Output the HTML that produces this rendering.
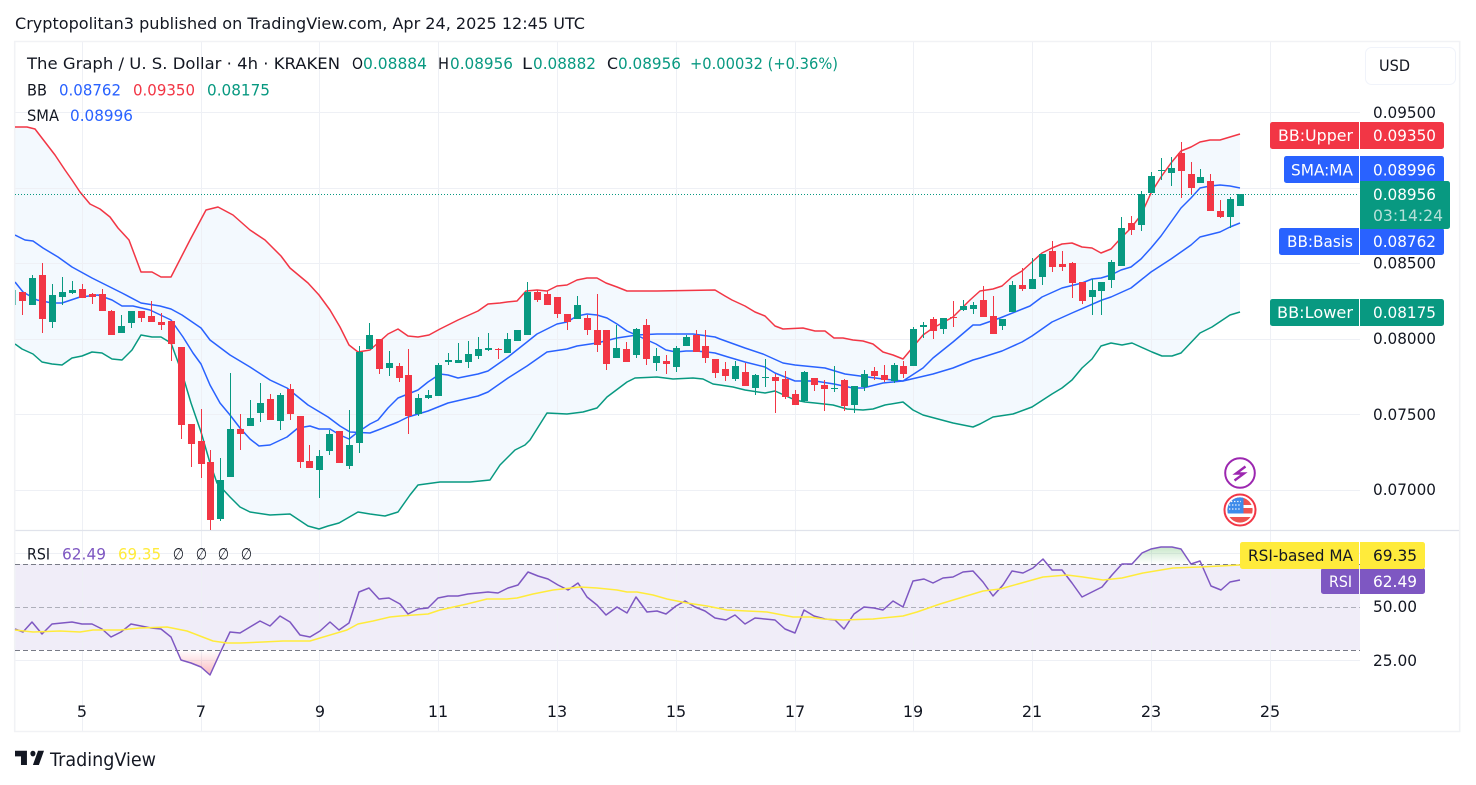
<!DOCTYPE html>
<html lang="en"><head><meta charset="utf-8"><title>The Graph / U. S. Dollar</title>
<style>
html,body{margin:0;padding:0;background:#fff;width:1476px;height:785px;overflow:hidden}
svg{display:block}
text{font-family:"DejaVu Sans","Liberation Sans",sans-serif;font-size:16px;fill:#131722}
.w{fill:#fff}.g{fill:#089981}.r{fill:#f23645}.b{fill:#2962ff}.p{fill:#7e57c2}.y{fill:#ffeb3b}
.l{fill:none;stroke-width:1.5;stroke-linejoin:round}
</style></head><body>
<svg width="1476" height="785" viewBox="0 0 1476 785" xmlns="http://www.w3.org/2000/svg">
<defs>
<clipPath id="c"><rect x="15" y="42" width="1345" height="488"/></clipPath>
<clipPath id="f"><circle cx="1240" cy="510" r="12.6"/></clipPath>
<linearGradient id="ob" gradientUnits="userSpaceOnUse" x1="0" y1="547" x2="0" y2="564"><stop offset="0" stop-color="#4caf50" stop-opacity=".3"/><stop offset="1" stop-color="#4caf50" stop-opacity="0"/></linearGradient>
<linearGradient id="os" gradientUnits="userSpaceOnUse" x1="0" y1="650" x2="0" y2="675"><stop offset="0" stop-color="#f23645" stop-opacity="0"/><stop offset="1" stop-color="#f23645" stop-opacity=".35"/></linearGradient>
</defs>
<text x="15" y="29" textLength="570" lengthAdjust="spacingAndGlyphs">Cryptopolitan3 published on TradingView.com, Apr 24, 2025 12:45 UTC</text>
<g clip-path="url(#c)">
<polygon fill="#f3f9fe" points="15,127 27,127 35,129 45,142 55,155 65,170 72,180 80,192 90,204 100,209 110,217 118,228 129,240 141,272 152,272 161,277 171,277 190,240 206,210 218,207 233,215 250,230 265,240 281,256 290,268 308,283 319,295 330,310 340,327 349,345 358,352 370,350 388,334 398,329 408,336 418,337 429,335 440,329 458,320 478,311 488,304 500,303 507,302 517,301 526,291 537,290 547,291 557,286 567,285 577,280 587,278 597,278 606,283 617,287 627,291 657,291 715,290 725,296 732,300 745,306 755,312 765,316 775,326 783,329 803,328 815,331 825,331 834,338 843,338 853,340 863,341 873,344 883,352 893,355 903,359 913,347 923,335 933,328 953,317 970,300 980,291 993,289 1002,286 1012,277 1022,271 1032,262 1042,253 1052,248 1062,244 1072,243 1082,247 1092,248 1101,253 1111,249 1121,238 1131,228 1141,215 1151,193 1161,177 1171,163 1181,151 1191,147 1200,142 1210,140 1220,140 1230,137 1240,134 1240,530 15,530"/>
<polygon fill="#fff" points="15,344 22,349 33,354 42,362 52,364 62,365 72,358 82,356 92,352 102,353 112,359 122,360 132,350 141,335 152,337 161,337 171,343 182,373 191,403 201,432 210,463 217,483 230,497 240,507 250,512 270,515 290,514 308,526 319,529 328,526 339,523 358,512 370,514 385,516 398,512 410,495 418,485 440,482 470,482 490,480 500,465 515,450 525,445 530,440 547,413 567,414 583,412 597,408 607,397 627,382 635,378 657,377 673,379 693,378 703,379 713,384 720,385 733,387 745,390 765,393 775,391 795,400 805,402 815,403 833,405 847,409 863,410 873,409 885,405 903,402 913,410 923,415 953,423 973,427 980,424 993,417 1013,414 1032,407 1052,394 1062,388 1072,380 1082,368 1092,359 1101,346 1111,343 1122,345 1132,343 1152,352 1162,356 1172,356 1181,353 1200,333 1212,327 1230,315 1240,312 1240,530 15,530"/>
</g>
<rect x="15" y="564" width="1345" height="86" fill="#f0edf8"/>
<path d="M15 112.5H1360M15 188.5H1360M15 263.5H1360M15 339.5H1360M15 414.5H1360M15 490.5H1360M15 553.5H1360M15 660.5H1360M82.5 42V731M201.5 42V731M319.5 42V731M438.5 42V731M557.5 42V731M676.5 42V731M795.5 42V731M913.5 42V731M1032.5 42V731M1151.5 42V731M1270.5 42V731" stroke="#eef0f5" stroke-width="1" fill="none"/>
<path d="M15 530.5H1459" stroke="#e0e3eb" stroke-width="1.2"/>
<rect x="14.7" y="41.5" width="1445" height="690" fill="none" stroke="#f1f2f5" stroke-width="1.5"/>
<g clip-path="url(#c)">
<polyline class="l" stroke="#f23645" points="15,127 27,127 35,129 45,142 55,155 65,170 72,180 80,192 90,204 100,209 110,217 118,228 129,240 141,272 152,272 161,277 171,277 190,240 206,210 218,207 233,215 250,230 265,240 281,256 290,268 308,283 319,295 330,310 340,327 349,345 358,352 370,350 388,334 398,329 408,336 418,337 429,335 440,329 458,320 478,311 488,304 500,303 507,302 517,301 526,291 537,290 547,291 557,286 567,285 577,280 587,278 597,278 606,283 617,287 627,291 657,291 715,290 725,296 732,300 745,306 755,312 765,316 775,326 783,329 803,328 815,331 825,331 834,338 843,338 853,340 863,341 873,344 883,352 893,355 903,359 913,347 923,335 933,328 953,317 970,300 980,291 993,289 1002,286 1012,277 1022,271 1032,262 1042,253 1052,248 1062,244 1072,243 1082,247 1092,248 1101,253 1111,249 1121,238 1131,228 1141,215 1151,193 1161,177 1171,163 1181,151 1191,147 1200,142 1210,140 1220,140 1230,137 1240,134"/>
<polyline class="l" stroke="#089981" points="15,344 22,349 33,354 42,362 52,364 62,365 72,358 82,356 92,352 102,353 112,359 122,360 132,350 141,335 152,337 161,337 171,343 182,373 191,403 201,432 210,463 217,483 230,497 240,507 250,512 270,515 290,514 308,526 319,529 328,526 339,523 358,512 370,514 385,516 398,512 410,495 418,485 440,482 470,482 490,480 500,465 515,450 525,445 530,440 547,413 567,414 583,412 597,408 607,397 627,382 635,378 657,377 673,379 693,378 703,379 713,384 720,385 733,387 745,390 765,393 775,391 795,400 805,402 815,403 833,405 847,409 863,410 873,409 885,405 903,402 913,410 923,415 953,423 973,427 980,424 993,417 1013,414 1032,407 1052,394 1062,388 1072,380 1082,368 1092,359 1101,346 1111,343 1122,345 1132,343 1152,352 1162,356 1172,356 1181,353 1200,333 1212,327 1230,315 1240,312"/>
<polyline class="l" stroke="#2962ff" points="15,235 25,240 33,241 43,248 58,257 72,267 92,278 122,293 141,303 160,306 171,309 182,315 201,328 210,340 230,355 250,367 270,380 287,388 308,405 328,417 340,426 350,432 370,433 378,430 398,422 408,417 428,411 448,403 478,396 488,392 508,378 527,366 547,352 567,349 577,346 597,343 617,338 637,335 657,334 693,334 715,337 720,339 745,348 763,354 783,363 795,365 825,368 845,374 860,376 883,379 903,381 933,374 953,368 973,360 980,358 1002,351 1022,342 1032,336 1052,322 1072,313 1102,300 1111,297 1131,288 1141,280 1151,272 1171,259 1191,245 1200,237 1220,232 1230,227 1240,223"/>
<polyline class="l" stroke="#2962ff" points="15,282 23,292 37,300 52,303 62,303 80,297 98,295 112,300 122,306 133,306 150,310 171,320 183,337 193,353 201,364 210,385 220,403 230,415 240,428 250,439 259,446 270,445 287,437 298,428 310,426 319,429 330,429 340,435 349,439 358,432 370,424 378,420 388,408 398,398 418,390 428,382 440,374 448,375 458,378 478,374 488,371 508,357 527,342 537,334 547,329 557,324 567,322 577,316 587,314 597,315 607,318 617,324 627,331 636,335 647,340 656,344 666,350 676,352 686,351 696,351 707,352 715,353 728,357 745,362 765,367 775,373 795,381 805,381 815,381 834,384 853,388 863,388 883,383 903,381 923,368 933,358 943,350 953,342 973,325 980,325 1000,318 1030,306 1042,297 1062,288 1082,283 1092,279 1101,278 1111,275 1121,270 1131,267 1141,259 1151,248 1161,236 1171,222 1181,208 1191,198 1200,188 1210,186 1220,185 1230,186 1240,188"/>
<path stroke="#089981" stroke-opacity=".55" stroke-width="1" fill="none" d="M15.5 290V305"/>
<!-- green wicks -->
<path stroke="#089981" stroke-width="1" fill="none" d="M32.5 275V305M52.5 284V328M62.5 277V305M72.5 281V294M121.5 315V333M131.5 311V328M220.5 458V521M230.5 373V477M250.5 400V426M260.5 383V422M280.5 393V430M319.5 450V498M329.5 430V455M349.5 410V469M359.5 346V453M369.5 323V349M389.5 351V376M418.5 394V416M428.5 390V399M438.5 363V396M448.5 353V365M458.5 343V363M468.5 341V368M478.5 337V359M488.5 333V351M507.5 333V353M517.5 330V341M527.5 282V335M577.5 296V319M616.5 325V358M636.5 328V358M656.5 348V371M676.5 346V372M686.5 335V346M735.5 361V381M755.5 374V395M765.5 359V387M804.5 371V402M834.5 366V392M854.5 386V413M864.5 370V391M894.5 363V383M913.5 327V366M923.5 322V338M943.5 318V334M963.5 300V311M973.5 302V314M1002.5 319V330M1012.5 281V312M1032.5 258V289M1042.5 254V285M1092.5 279V315M1101.5 282V315M1111.5 260V288M1121.5 217V266M1141.5 191V231M1151.5 172V193M1161.5 158V180M1171.5 157V186M1200.5 169V183M1230.5 197V228M1240.5 194V206"/>
<!-- green bodies -->
<path stroke="#089981" stroke-width="7" fill="none" d="M32.5 278V305M52.5 295V322M62.5 292V297M72.5 290V293M121.5 326V333M131.5 311V323M220.5 480V519M230.5 429V477M250.5 418V426M260.5 403V413M280.5 395V421M319.5 456V470M329.5 434V451M349.5 445V466M359.5 352V443M369.5 335V349M389.5 363V368M418.5 398V414M428.5 395V398M438.5 365V396M448.5 360V362M458.5 360V363M468.5 354V362M478.5 349V356M488.5 348V350M507.5 339V353M517.5 330V341M527.5 292V335M577.5 305V319M616.5 348V358M636.5 329V355M656.5 356V363M676.5 348V367M686.5 337V346M735.5 366V379M755.5 375V388M765.5 377V378M804.5 372V401M834.5 388V389M854.5 386V405M864.5 374V387M894.5 365V381M913.5 329V366M923.5 325V327M943.5 318V329M963.5 306V310M973.5 305V309M1002.5 319V326M1012.5 285V312M1032.5 279V289M1042.5 254V277M1092.5 290V297M1101.5 282V291M1111.5 262V280M1121.5 228V266M1141.5 194V225M1151.5 176V193M1161.5 170V171M1171.5 168V173M1200.5 177V183M1230.5 199V217M1240.5 194V206"/>
<!-- red wicks -->
<path stroke="#f23645" stroke-width="1" fill="none" d="M22.5 292V315M42.5 263V333M82.5 284V298M92.5 293V304M102.5 289V311M111.5 310V335M141.5 311V322M151.5 301V322M161.5 313V330M171.5 321V361M181.5 347V439M191.5 424V467M201.5 409V478M210.5 450V530M240.5 414V450M270.5 394V420M290.5 384V420M300.5 416V468M309.5 445V468M339.5 431V463M379.5 339V374M399.5 363V382M408.5 349V434M498.5 348V359M537.5 290V302M547.5 291V305M557.5 297V318M567.5 314V330M587.5 315V335M597.5 294V352M606.5 330V370M626.5 342V362M646.5 319V365M666.5 355V374M696.5 330V352M705.5 330V363M715.5 359V378M725.5 362V381M745.5 363V386M775.5 374V413M785.5 371V399M795.5 390V405M814.5 378V391M824.5 380V411M844.5 379V411M874.5 367V380M884.5 365V382M903.5 361V378M933.5 317V339M953.5 301V327M983.5 286V317M993.5 296V334M1022.5 268V291M1052.5 241V272M1062.5 251V271M1072.5 262V298M1082.5 282V304M1131.5 216V235M1181.5 142V198M1191.5 162V195M1210.5 174V211M1220.5 200V218"/>
<!-- red bodies -->
<path stroke="#f23645" stroke-width="7" fill="none" d="M22.5 292V301M42.5 275V319M82.5 289V298M92.5 294V297M102.5 294V311M111.5 311V335M141.5 311V318M151.5 316V322M161.5 322V325M171.5 321V344M181.5 347V425M191.5 424V444M201.5 441V464M210.5 462V520M240.5 429V434M270.5 399V420M290.5 389V414M300.5 416V462M309.5 461V468M339.5 431V463M379.5 339V369M399.5 366V378M408.5 375V416M498.5 349V350M537.5 292V300M547.5 294V305M557.5 297V314M567.5 314V322M587.5 318V330M597.5 330V345M606.5 330V364M626.5 349V362M646.5 325V359M666.5 361V364M696.5 335V352M705.5 346V358M715.5 359V373M725.5 369V376M745.5 372V386M775.5 377V381M785.5 379V397M795.5 394V405M814.5 378V385M824.5 385V389M844.5 380V406M874.5 371V376M884.5 375V380M903.5 366V374M933.5 319V331M953.5 317V318M983.5 300V317M993.5 316V334M1022.5 285V289M1052.5 251V267M1062.5 264V267M1072.5 263V283M1082.5 282V301M1131.5 223V230M1181.5 153V171M1191.5 174V188M1210.5 181V211M1220.5 211V217"/>
</g>
<path d="M15 194.5H1358" stroke="#089981" stroke-width="1" stroke-dasharray="1 2" fill="none"/>
<!-- RSI pane -->
<path d="M15 564.5H1360M15 650.5H1360" stroke="#787b86" stroke-width="1" stroke-dasharray="5 3" fill="none"/>
<path d="M15 607.5H1360" stroke="#787b86" stroke-opacity=".55" stroke-width="1" stroke-dasharray="5 3" fill="none"/>
<polygon fill="url(#ob)" points="1122,564 1132,564 1142,553 1151,549 1161,547 1172,547 1181,549 1191,564"/>
<polygon fill="url(#os)" points="177,650 181,660 191,663 201,667 210,675 220,653 221,650"/>
<polyline class="l" stroke="#7e57c2" points="15,629 23,632 32,622 42,634 52,624 62,623 72,622 82,624 92,624 102,629 111,637 121,632 131,624 141,626 151,628 161,629 171,637 181,660 191,663 201,667 210,675 220,653 230,632 240,633 250,627 260,621 270,626 280,616 290,622 300,635 310,637 320,631 330,622 339,630 349,623 359,592 369,588 379,599 389,598 400,604 408,614 418,609 428,608 438,598 448,596 458,596 468,594 478,593 488,592 498,593 508,588 518,585 528,572 538,576 548,579 558,585 568,590 578,583 587,597 597,605 606,615 617,607 627,613 636,597 647,612 657,611 666,614 676,606 685,601 695,607 705,611 715,618 726,620 735,615 745,624 755,618 765,619 775,620 785,629 795,633 804,610 814,616 825,619 835,620 844,629 854,614 864,607 874,608 883,610 893,601 903,607 913,581 924,579 933,583 943,578 953,577 963,572 973,571 983,582 993,596 1003,585 1012,571 1023,573 1033,568 1043,559 1052,570 1062,570 1072,583 1082,597 1092,592 1102,587 1112,575 1122,564 1132,564 1142,553 1151,549 1161,547 1172,547 1181,549 1191,564 1200,561 1211,586 1221,590 1230,582 1240,580"/>
<polyline class="l" stroke="#ffeb3b" points="15,630 33,632 60,631 80,632 93,630 120,630 140,628 167,627 187,631 200,636 213,641 227,643 240,643 263,642 283,641 310,641 320,638 347,630 358,624 373,621 390,617 400,616 428,614 440,610 467,604 487,599 507,599 517,598 533,594 553,590 580,587 597,588 617,590 627,592 637,592 653,595 667,599 687,603 707,606 727,610 747,611 767,612 793,617 810,617 823,619 843,620 873,619 903,616 917,612 940,604 983,591 1000,589 1043,577 1067,575 1083,577 1103,580 1122,578 1143,573 1173,568 1200,567 1240,565"/>
<!-- legend -->
<text x="27" y="69" textLength="313" lengthAdjust="spacingAndGlyphs">The Graph / U. S. Dollar · 4h · KRAKEN</text>
<text x="352" y="69" textLength="11" lengthAdjust="spacingAndGlyphs">O</text><text class="g" x="363" y="69" textLength="64" lengthAdjust="spacingAndGlyphs">0.08884</text>
<text x="438" y="69" textLength="11" lengthAdjust="spacingAndGlyphs">H</text><text class="g" x="450" y="69" textLength="63" lengthAdjust="spacingAndGlyphs">0.08956</text>
<text x="522" y="69" textLength="10" lengthAdjust="spacingAndGlyphs">L</text><text class="g" x="533" y="69" textLength="63" lengthAdjust="spacingAndGlyphs">0.08882</text>
<text x="607" y="69" textLength="11" lengthAdjust="spacingAndGlyphs">C</text><text class="g" x="618" y="69" textLength="63" lengthAdjust="spacingAndGlyphs">0.08956</text>
<text class="g" x="690" y="69" textLength="148" lengthAdjust="spacingAndGlyphs">+0.00032 (+0.36%)</text>
<text x="27" y="95.500" textLength="20" lengthAdjust="spacingAndGlyphs">BB</text><text class="b" x="59" y="95.500" textLength="62" lengthAdjust="spacingAndGlyphs">0.08762</text><text class="r" x="133" y="95.500" textLength="62" lengthAdjust="spacingAndGlyphs">0.09350</text><text class="g" x="207" y="95.500" textLength="63" lengthAdjust="spacingAndGlyphs">0.08175</text>
<text x="27" y="121" textLength="32" lengthAdjust="spacingAndGlyphs">SMA</text><text class="b" x="70" y="121" textLength="63" lengthAdjust="spacingAndGlyphs">0.08996</text>
<text x="27" y="559.500" textLength="23" lengthAdjust="spacingAndGlyphs">RSI</text><text class="p" x="62" y="559.500" textLength="44" lengthAdjust="spacingAndGlyphs">62.49</text><text class="y" x="118" y="559.500" textLength="43" lengthAdjust="spacingAndGlyphs">69.35</text>
<text x="173" y="559.500" textLength="11" lengthAdjust="spacingAndGlyphs">∅</text><text x="196" y="559.500" textLength="11" lengthAdjust="spacingAndGlyphs">∅</text><text x="218" y="559.500" textLength="11" lengthAdjust="spacingAndGlyphs">∅</text><text x="241" y="559.500" textLength="11" lengthAdjust="spacingAndGlyphs">∅</text>
<!-- USD -->
<rect x="1365.500" y="47.500" width="90" height="37" rx="6" fill="#fff" stroke="#f0f3fa" stroke-width="1"/>
<text x="1379" y="71" textLength="31" lengthAdjust="spacingAndGlyphs">USD</text>
<!-- scale text -->
<text x="1373" y="118" textLength="63" lengthAdjust="spacingAndGlyphs">0.09500</text>
<text x="1373" y="268.500" textLength="63" lengthAdjust="spacingAndGlyphs">0.08500</text>
<text x="1373" y="344" textLength="63" lengthAdjust="spacingAndGlyphs">0.08000</text>
<text x="1373" y="420" textLength="63" lengthAdjust="spacingAndGlyphs">0.07500</text>
<text x="1373" y="495" textLength="63" lengthAdjust="spacingAndGlyphs">0.07000</text>
<text x="1373" y="612" textLength="44" lengthAdjust="spacingAndGlyphs">50.00</text>
<text x="1373" y="666" textLength="44" lengthAdjust="spacingAndGlyphs">25.00</text>
<!-- price labels -->
<rect x="1270" y="122" width="89" height="27" rx="2.500" fill="#f23645"/><rect x="1360" y="122" width="84" height="27" rx="2.500" fill="#f23645"/><rect x="1357" y="122" width="2" height="27" fill="#f23645"/><rect x="1360" y="122" width="3" height="27" fill="#f23645"/>
<text class="w" x="1278" y="141" textLength="75" lengthAdjust="spacingAndGlyphs">BB:Upper</text><text class="w" x="1373" y="141" textLength="63" lengthAdjust="spacingAndGlyphs">0.09350</text>
<rect x="1284" y="156" width="75" height="27" rx="2.500" fill="#2962ff"/><rect x="1360" y="156" width="84" height="27" rx="2.500" fill="#2962ff"/><rect x="1357" y="156" width="2" height="27" fill="#2962ff"/><rect x="1360" y="156" width="3" height="27" fill="#2962ff"/>
<text class="w" x="1291" y="175.700" textLength="62" lengthAdjust="spacingAndGlyphs">SMA:MA</text><text class="w" x="1373" y="175.700" textLength="63" lengthAdjust="spacingAndGlyphs">0.08996</text>
<rect x="1279" y="228" width="80" height="27" rx="2.500" fill="#2962ff"/><rect x="1360" y="228" width="84" height="27" rx="2.500" fill="#2962ff"/><rect x="1357" y="228" width="2" height="27" fill="#2962ff"/><rect x="1360" y="228" width="3" height="27" fill="#2962ff"/>
<text class="w" x="1287" y="247" textLength="66" lengthAdjust="spacingAndGlyphs">BB:Basis</text><text class="w" x="1373" y="247" textLength="63" lengthAdjust="spacingAndGlyphs">0.08762</text>
<rect x="1270" y="299" width="89" height="27" rx="2.500" fill="#089981"/><rect x="1360" y="299" width="84" height="27" rx="2.500" fill="#089981"/><rect x="1357" y="299" width="2" height="27" fill="#089981"/><rect x="1360" y="299" width="3" height="27" fill="#089981"/>
<text class="w" x="1277" y="318" textLength="76" lengthAdjust="spacingAndGlyphs">BB:Lower</text><text class="w" x="1373" y="318" textLength="63" lengthAdjust="spacingAndGlyphs">0.08175</text>
<rect x="1360" y="181" width="90" height="48" rx="2.500" fill="#089981"/><rect x="1360" y="181" width="4" height="48" fill="#089981"/>
<text class="w" x="1373" y="200" textLength="63" lengthAdjust="spacingAndGlyphs">0.08956</text>
<text x="1373" y="221" textLength="70" lengthAdjust="spacingAndGlyphs" style="fill:#b5e0d8">03:14:24</text>
<!-- RSI labels -->
<rect x="1321" y="568" width="38" height="26" rx="2.500" fill="#7e57c2"/><rect x="1357" y="568" width="2" height="26" fill="#7e57c2"/><rect x="1360" y="568" width="65" height="26" rx="2.500" fill="#7e57c2"/><rect x="1360" y="568" width="3" height="26" fill="#7e57c2"/>
<text class="w" x="1329" y="587" textLength="23" lengthAdjust="spacingAndGlyphs">RSI</text><text class="w" x="1373" y="587" textLength="44" lengthAdjust="spacingAndGlyphs">62.49</text>
<rect x="1240" y="542" width="119" height="27" rx="2.500" fill="#ffeb3b"/><rect x="1357" y="542" width="2" height="27" fill="#ffeb3b"/><rect x="1360" y="542" width="65" height="27" rx="2.500" fill="#ffeb3b"/><rect x="1360" y="542" width="3" height="27" fill="#ffeb3b"/>
<text x="1248" y="561" textLength="105" lengthAdjust="spacingAndGlyphs">RSI-based MA</text><text x="1373" y="561" textLength="44" lengthAdjust="spacingAndGlyphs">69.35</text>
<!-- event icons -->
<circle cx="1240" cy="473" r="14.800" fill="#fff" stroke="#9c27b0" stroke-width="2"/>
<path d="M1245.500 466.500L1236 473.500H1244L1234.500 480.500" fill="none" stroke="#9c27b0" stroke-width="2.400" stroke-linejoin="miter"/>
<circle cx="1240" cy="510" r="15.500" fill="#fff" stroke="#f23645" stroke-width="2"/>
<g clip-path="url(#f)">
<rect x="1226" y="497" width="28" height="8" fill="#ef5350"/>
<rect x="1226" y="508" width="28" height="5.500" fill="#ef5350"/>
<rect x="1226" y="517" width="28" height="7" fill="#ef5350"/>
<rect x="1226" y="497" width="17.500" height="16.500" fill="#3d8bea"/>
<path d="M1231 501.500h10M1229 505h12M1229 509h12" stroke="#fff" stroke-width="1.300" stroke-dasharray="1.300 1.800" fill="none"/>
</g>
<!-- time axis -->
<text x="82" y="717" text-anchor="middle">5</text><text x="201" y="717" text-anchor="middle">7</text><text x="320" y="717" text-anchor="middle">9</text><text x="438" y="717" text-anchor="middle">11</text><text x="557" y="717" text-anchor="middle">13</text><text x="676" y="717" text-anchor="middle">15</text><text x="795" y="717" text-anchor="middle">17</text><text x="913" y="717" text-anchor="middle">19</text><text x="1032" y="717" text-anchor="middle">21</text><text x="1151" y="717" text-anchor="middle">23</text><text x="1270" y="717" text-anchor="middle">25</text>
<!-- logo -->
<path transform="translate(15 745) scale(.853 .95)" fill="#131722" d="M14 6H0v6h7v9h7V6zM28 21h-7l6-15h7l-6 15zM21 12a3 3 0 1 0 0-6 3 3 0 0 0 0 6z"/>
<text x="50" y="766" textLength="106" lengthAdjust="spacingAndGlyphs" style="font-size:19px">TradingView</text>
</svg>
</body></html>
